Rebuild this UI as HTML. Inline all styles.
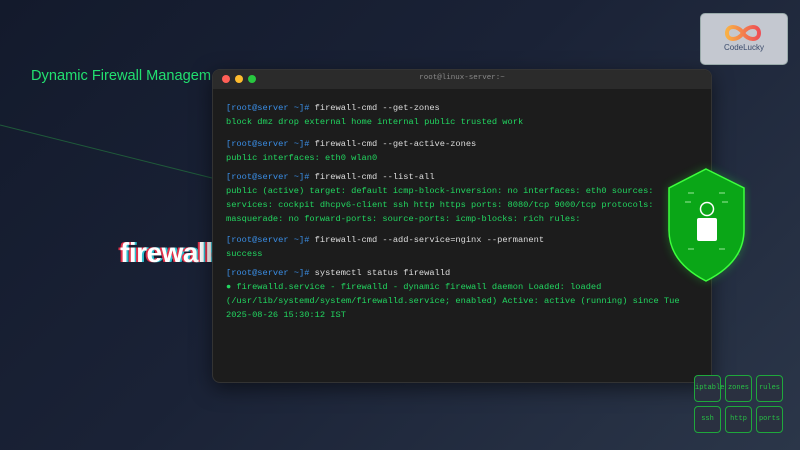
<!DOCTYPE html><html><head><style>
body{margin:0;width:800px;height:450px;overflow:hidden;background:linear-gradient(135deg,#131a2c 0%,#1a2236 45%,#2b3649 100%);position:relative;font-family:"Liberation Sans",sans-serif}
.t{position:absolute;left:212px;top:69px;width:498px;height:312px;background:#1c1c1c;border-radius:8px;overflow:hidden;box-shadow:0 6px 20px rgba(0,0,0,.5);border:1px solid #333}
.bar{height:19px;background:#2b2b2b;position:relative}
.d{position:absolute;top:5px;width:8px;height:8px;border-radius:50%}
.ttl{position:absolute;left:0;right:0;top:4px;text-align:center;font:7.5px "Liberation Mono",monospace;color:#8a8a8a}
pre{margin:0;position:absolute;left:13px;top:31px;font:8.7px/14px "Liberation Mono",monospace;color:#22d660}
.p{color:#3a8ee6}.c{color:#ddd}
.box{position:absolute;width:25px;height:25px;border:1.5px solid #1fa83c;border-radius:4px;background:#2a3040;color:#27c244;font:7px "Liberation Mono",monospace;text-align:center;line-height:25px;overflow:visible;white-space:nowrap}
</style></head><body>
<svg style="position:absolute;left:0;top:0" width="800" height="450"><line x1="0" y1="125" x2="212" y2="178" stroke="#1f5a3a" stroke-width="1"/><line x1="700" y1="245" x2="740" y2="255" stroke="#1f5a3a" stroke-width="1"/></svg>
<div style="position:absolute;left:31px;top:68px;font-size:14.6px;color:#22e070;white-space:nowrap">Dynamic Firewall Managem</div>
<div style="position:absolute;left:120px;top:237px;font-size:28px;font-weight:bold;color:#fff;text-shadow:-2px 0 #e0304a,2px 0 #30c0d0;letter-spacing:-0.5px">firewalld</div>
<div class="t"><div class="bar"><span class="d" style="left:9px;background:#ff5f57"></span><span class="d" style="left:22px;background:#febc2e"></span><span class="d" style="left:35px;background:#28c840"></span><div class="ttl">root@linux-server:~</div></div>
<pre><span class="p">[root@server ~]#</span> <span class="c">firewall-cmd --get-zones</span>
block dmz drop external home internal public trusted work</pre>
<pre style="top:67px"><span class="p">[root@server ~]#</span> <span class="c">firewall-cmd --get-active-zones</span>
public interfaces: eth0 wlan0</pre>
<pre style="top:100px"><span class="p">[root@server ~]#</span> <span class="c">firewall-cmd --list-all</span>
public (active) target: default icmp-block-inversion: no interfaces: eth0 sources:
services: cockpit dhcpv6-client ssh http https ports: 8080/tcp 9000/tcp protocols:
masquerade: no forward-ports: source-ports: icmp-blocks: rich rules:</pre>
<pre style="top:163px"><span class="p">[root@server ~]#</span> <span class="c">firewall-cmd --add-service=nginx --permanent</span>
success</pre>
<pre style="top:196px"><span class="p">[root@server ~]#</span> <span class="c">systemctl status firewalld</span>
● firewalld.service - firewalld - dynamic firewall daemon Loaded: loaded
(/usr/lib/systemd/system/firewalld.service; enabled) Active: active (running) since Tue
2025-08-26 15:30:12 IST</pre>
</div>
<div style="position:absolute;left:700px;top:13px;width:86px;height:50px;background:#c4c8d0;border-radius:5px;border:1px solid #9aa"></div>
<svg style="position:absolute;left:722px;top:22px" width="42" height="22" viewBox="0 0 42 22"><defs><linearGradient id="lg"><stop offset="0" stop-color="#f9b046"/><stop offset="1" stop-color="#ee4f55"/></linearGradient></defs><path d="M21 11C16 3 5 3 5 11s11 8 16 0 16-8 16 0-11 8-16 0" fill="none" stroke="url(#lg)" stroke-width="4"/></svg>
<div style="position:absolute;left:700px;top:43px;width:88px;text-align:center;font:8px 'Liberation Sans',sans-serif;color:#3a4a6a">CodeLucky</div>
<svg style="position:absolute;left:660px;top:160px" width="95" height="130" viewBox="660 160 95 130">
<defs><filter id="g"><feGaussianBlur stdDeviation="5"/></filter></defs>
<path d="M706 169L744 188V230Q744 262 706 281Q669 262 669 230V188Z" fill="#22ff33" opacity=".35" filter="url(#g)"/>
<path d="M706 169L744 188V230Q744 262 706 281Q669 262 669 230V188Z" fill="#0aa617" stroke="#3dff3d" stroke-width="1.5"/>
<circle cx="707" cy="209" r="6.5" fill="none" stroke="#fff" stroke-width="1.5"/>
<rect x="697" y="218" width="20" height="23" rx="2" fill="#fff"/>
<g stroke="#9be89b" stroke-width="1"><line x1="688" y1="193" x2="694" y2="193"/><line x1="719" y1="193" x2="725" y2="193"/><line x1="685" y1="202" x2="691" y2="202"/><line x1="722" y1="202" x2="728" y2="202"/><line x1="688" y1="249" x2="694" y2="249"/><line x1="719" y1="249" x2="725" y2="249"/></g>
</svg>
<div class="box" style="left:694px;top:375px">iptables</div><div class="box" style="left:725px;top:375px">zones</div><div class="box" style="left:756px;top:375px">rules</div>
<div class="box" style="left:694px;top:406px">ssh</div><div class="box" style="left:725px;top:406px">http</div><div class="box" style="left:756px;top:406px">ports</div>
</body></html>
